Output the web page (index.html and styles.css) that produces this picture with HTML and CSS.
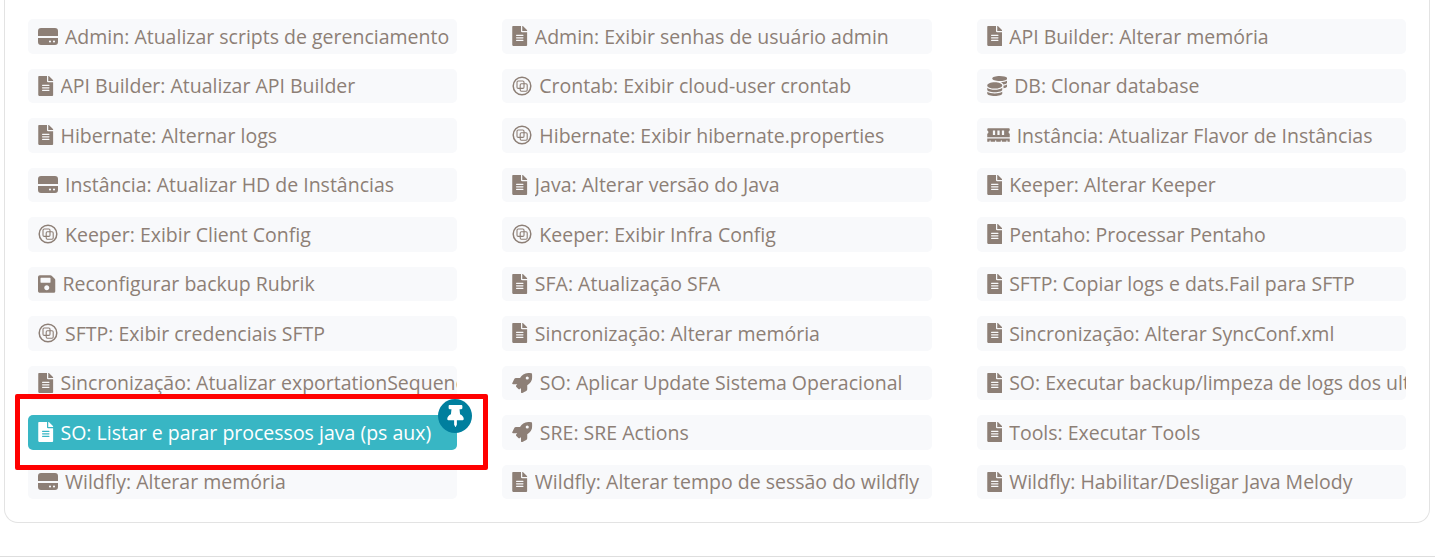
FILE: index.html
```html
<!DOCTYPE html>
<html lang="pt-BR">
<head>
    <meta charset="UTF-8">
    <meta name="viewport" content="width=device-width, initial-scale=1.0">
    <title>Ações</title>
    <link rel="stylesheet" href="styles.css">
</head>
<body>
    <svg class="icon-defs" aria-hidden="true">
        <symbol id="i-file" viewBox="0 0 384 512"><path d="M224 136V0H24C10.7 0 0 10.7 0 24v464c0 13.3 10.7 24 24 24h336c13.3 0 24-10.7 24-24V160H248c-13.2 0-24-10.8-24-24zm64 236c0 6.6-5.4 12-12 12H108c-6.6 0-12-5.4-12-12v-8c0-6.6 5.4-12 12-12h168c6.6 0 12 5.4 12 12v8zm0-64c0 6.6-5.4 12-12 12H108c-6.6 0-12-5.4-12-12v-8c0-6.6 5.4-12 12-12h168c6.6 0 12 5.4 12 12v8zm0-72v8c0 6.6-5.4 12-12 12H108c-6.6 0-12-5.4-12-12v-8c0-6.6 5.4-12 12-12h168c6.6 0 12 5.4 12 12zm96-114.1v6.1H256V0h6.1c6.4 0 12.5 2.5 17 7l97.9 98c4.5 4.5 7 10.6 7 16.9z"/></symbol>
        <symbol id="i-hdd" viewBox="0 0 20 17"><path fill-rule="evenodd" d="M3 0h14a3 3 0 0 1 3 3v5H0V3a3 3 0 0 1 3-3zM0 10h20v4a3 3 0 0 1-3 3H3a3 3 0 0 1-3-3v-4zm12 2.4a1.1 1.1 0 1 0 0 2.2 1.1 1.1 0 0 0 0-2.2zm4 0a1.1 1.1 0 1 0 0 2.2 1.1 1.1 0 0 0 0-2.2z"/></symbol>
        <symbol id="i-clone" viewBox="0 0 20 20"><g fill="none" stroke="currentColor"><circle cx="10" cy="10" r="8.8" stroke-width="1.5"/><rect x="5" y="5" width="7" height="7.4" rx="1.2" stroke-width="1.1"/><rect x="8.2" y="7.8" width="7" height="7.4" rx="1.2" stroke-width="1.1"/></g></symbol>
        <symbol id="i-coins" viewBox="0 0 512 512"><path d="M0 405.3V448c0 35.3 86 64 192 64s192-28.7 192-64v-42.7C342.7 434.4 267.2 448 192 448S41.3 434.4 0 405.3zM320 128c106 0 192-28.7 192-64S426 0 320 0 128 28.7 128 64s86 64 192 64zM0 300.4V352c0 35.3 86 64 192 64s192-28.7 192-64v-51.6c-41.3 34-116.9 51.6-192 51.6S41.3 334.4 0 300.4zm416 11c57.3-11.1 96-31.7 96-55.4v-42.7c-23.2 16.4-57.3 27.6-96 34.5v63.6zM192 160C86 160 0 195.8 0 240s86 80 192 80 192-35.8 192-80-86-80-192-80zm219.3 56.3c60-10.8 100.7-32 100.7-56.3v-42.7c-35.5 25.1-96.5 38.6-160.7 41.8 29.5 14.3 51.2 33.5 60 57.2z"/></symbol>
        <symbol id="i-memory" viewBox="0 0 640 512"><path d="M640 130.94V96c0-17.67-14.33-32-32-32H32C14.33 64 0 78.33 0 96v34.94c18.6 6.61 32 24.19 32 45.06s-13.4 38.45-32 45.06V320h640v-98.94c-18.6-6.61-32-24.19-32-45.06s13.4-38.45 32-45.06zM224 256h-64V128h64v128zm128 0h-64V128h64v128zm128 0h-64V128h64v128zM0 448h64v-26.67c0-8.84 7.16-16 16-16s16 7.16 16 16V448h128v-26.67c0-8.84 7.16-16 16-16s16 7.16 16 16V448h128v-26.67c0-8.84 7.16-16 16-16s16 7.16 16 16V448h128v-26.67c0-8.84 7.16-16 16-16s16 7.16 16 16V448h64v-96H0v96z"/></symbol>
        <symbol id="i-save" viewBox="0 0 448 512"><path d="M433.941 129.941l-83.882-83.882A48 48 0 0 0 316.118 32H48C21.49 32 0 53.49 0 80v352c0 26.51 21.49 48 48 48h352c26.51 0 48-21.49 48-48V163.882a48 48 0 0 0-14.059-33.941zM224 416c-35.346 0-64-28.654-64-64 0-35.346 28.654-64 64-64s64 28.654 64 64c0 35.346-28.654 64-64 64zm96-304.52V212c0 6.627-5.373 12-12 12H76c-6.627 0-12-5.373-12-12V108c0-6.627 5.373-12 12-12h228.52c3.183 0 6.235 1.264 8.485 3.515l3.48 3.48A11.996 11.996 0 0 1 320 111.48z"/></symbol>
        <symbol id="i-rocket" viewBox="0 0 512 512"><path d="M505.05 19.1a15.89 15.89 0 0 0-12.2-12.2C460.65 0 435.46 0 410.36 0c-103.2 0-165.1 55.2-211.29 128H94.87A48 48 0 0 0 52 154.49l-49.42 98.8A24 24 0 0 0 24.07 288h103.77l-22.47 22.47a32 32 0 0 0 0 45.25l50.9 50.91a32 32 0 0 0 45.26 0L224 384.16V488a24 24 0 0 0 34.7 21.49l98.7-49.39a47.91 47.91 0 0 0 26.5-42.9V312.79c72.59-46.3 128-108.4 128-211.09.1-25.2.1-50.4-6.85-82.6zM384 168a40 40 0 1 1 40-40 40 40 0 0 1-40 40z"/></symbol>
        <symbol id="i-pin" viewBox="0 0 384 512"><path d="M298.028 214.267L285.793 96H328c13.255 0 24-10.745 24-24V24c0-13.255-10.745-24-24-24H56C42.745 0 32 10.745 32 24v48c0 13.255 10.745 24 24 24h42.207L85.972 214.267C37.465 236.82 0 277.261 0 328c0 13.255 10.745 24 24 24h136v104.007c0 1.242.289 2.467.845 3.578l24 48c2.941 5.882 11.364 5.893 14.311 0l24-48a8.008 8.008 0 0 0 .845-3.578V352h136c13.255 0 24-10.745 24-24-.001-51.183-37.983-91.42-85.973-113.733z"/></symbol>
    </svg>

    <div class="card">
        <div class="action-grid">
            <div class="item"><svg class="icon icon-hdd"><use href="#i-hdd"/></svg><span class="label">Admin: Atualizar scripts de gerenciamento</span></div>
            <div class="item"><svg class="icon icon-file"><use href="#i-file"/></svg><span class="label">Admin: Exibir senhas de usuário admin</span></div>
            <div class="item"><svg class="icon icon-file"><use href="#i-file"/></svg><span class="label">API Builder: Alterar memória</span></div>

            <div class="item"><svg class="icon icon-file"><use href="#i-file"/></svg><span class="label">API Builder: Atualizar API Builder</span></div>
            <div class="item"><svg class="icon icon-clone"><use href="#i-clone"/></svg><span class="label">Crontab: Exibir cloud-user crontab</span></div>
            <div class="item"><svg class="icon icon-coins"><use href="#i-coins"/></svg><span class="label">DB: Clonar database</span></div>

            <div class="item"><svg class="icon icon-file"><use href="#i-file"/></svg><span class="label">Hibernate: Alternar logs</span></div>
            <div class="item"><svg class="icon icon-clone"><use href="#i-clone"/></svg><span class="label">Hibernate: Exibir hibernate.properties</span></div>
            <div class="item"><svg class="icon icon-memory"><use href="#i-memory"/></svg><span class="label">Instância: Atualizar Flavor de Instâncias</span></div>

            <div class="item"><svg class="icon icon-hdd"><use href="#i-hdd"/></svg><span class="label">Instância: Atualizar HD de Instâncias</span></div>
            <div class="item"><svg class="icon icon-file"><use href="#i-file"/></svg><span class="label">Java: Alterar versão do Java</span></div>
            <div class="item"><svg class="icon icon-file"><use href="#i-file"/></svg><span class="label">Keeper: Alterar Keeper</span></div>

            <div class="item"><svg class="icon icon-clone"><use href="#i-clone"/></svg><span class="label">Keeper: Exibir Client Config</span></div>
            <div class="item"><svg class="icon icon-clone"><use href="#i-clone"/></svg><span class="label">Keeper: Exibir Infra Config</span></div>
            <div class="item"><svg class="icon icon-file"><use href="#i-file"/></svg><span class="label">Pentaho: Processar Pentaho</span></div>

            <div class="item"><svg class="icon icon-save"><use href="#i-save"/></svg><span class="label">Reconfigurar backup Rubrik</span></div>
            <div class="item"><svg class="icon icon-file"><use href="#i-file"/></svg><span class="label">SFA: Atualização SFA</span></div>
            <div class="item"><svg class="icon icon-file"><use href="#i-file"/></svg><span class="label">SFTP: Copiar logs e dats.Fail para SFTP</span></div>

            <div class="item"><svg class="icon icon-clone"><use href="#i-clone"/></svg><span class="label">SFTP: Exibir credenciais SFTP</span></div>
            <div class="item"><svg class="icon icon-file"><use href="#i-file"/></svg><span class="label">Sincronização: Alterar memória</span></div>
            <div class="item"><svg class="icon icon-file"><use href="#i-file"/></svg><span class="label">Sincronização: Alterar SyncConf.xml</span></div>

            <div class="item"><svg class="icon icon-file"><use href="#i-file"/></svg><span class="label">Sincronização: Atualizar exportationSequence</span></div>
            <div class="item"><svg class="icon icon-rocket"><use href="#i-rocket"/></svg><span class="label">SO: Aplicar Update Sistema Operacional</span></div>
            <div class="item"><svg class="icon icon-file"><use href="#i-file"/></svg><span class="label">SO: Executar backup/limpeza de logs dos ultimos dias</span></div>

            <div class="item selected">
                <svg class="icon icon-file"><use href="#i-file"/></svg><span class="label">SO: Listar e parar processos java (ps aux)</span>
                <span class="pin-badge"><svg class="pin-icon"><use href="#i-pin"/></svg></span>
                <span class="highlight-box"></span>
            </div>
            <div class="item"><svg class="icon icon-rocket"><use href="#i-rocket"/></svg><span class="label">SRE: SRE Actions</span></div>
            <div class="item"><svg class="icon icon-file"><use href="#i-file"/></svg><span class="label">Tools: Executar Tools</span></div>

            <div class="item"><svg class="icon icon-hdd"><use href="#i-hdd"/></svg><span class="label">Wildfly: Alterar memória</span></div>
            <div class="item"><svg class="icon icon-file"><use href="#i-file"/></svg><span class="label">Wildfly: Alterar tempo de sessão do wildfly</span></div>
            <div class="item"><svg class="icon icon-file"><use href="#i-file"/></svg><span class="label">Wildfly: Habilitar/Desligar Java Melody</span></div>
        </div>
    </div>
    <div class="footer-line"></div>
</body>
</html>
```

FILE: styles.css
```css
* { margin: 0; padding: 0; box-sizing: border-box; }
html, body { height: 100%; overflow: hidden; }
body { font-family: "Open Sans", Arial, sans-serif; background: #fff; color: #8d7f76; padding: 0 5px 0 4px; }
.icon-defs { display: none; }

.card { border: 1px solid #e3e3e3; border-top: none; border-radius: 0 0 14px 14px; padding: 19px 23px 23px; }
.action-grid { display: grid; grid-template-columns: repeat(3, minmax(0, 1fr)); column-gap: 45px; row-gap: 15px; }

.item { position: relative; display: flex; align-items: center; height: 34.5px; padding-left: 10px; background: #f8f9fb; border-radius: 5px; font-size: 19.5px; line-height: 35px; }
.label { flex: 1; min-width: 0; overflow: hidden; white-space: nowrap; }

.icon { flex: none; fill: currentColor; margin-right: 7px; }
.icon-file { width: 15.5px; height: 20px; }
.icon-hdd { width: 20px; height: 17px; }
.icon-clone { width: 20px; height: 20px; }
.icon-coins { width: 20.5px; height: 20px; }
.icon-memory { width: 23px; height: 18px; }
.icon-save { width: 17.5px; height: 20px; }
.icon-rocket { width: 20.5px; height: 20px; }

.selected { z-index: 1; background: #38b6c4; color: #fff; }
.pin-badge { position: absolute; z-index: 1; top: -16px; right: -15px; display: flex; align-items: center; justify-content: center; width: 34px; height: 34px; border-radius: 50%; background: #007f9e; }
.pin-icon { width: 17px; height: 22px; fill: #fff; }
.highlight-box { position: absolute; top: -21px; left: -13px; width: 473px; height: 76px; border: 5px solid #f00; border-radius: 2px; pointer-events: none; }

.footer-line { margin: 33px -5px 0 -4px; border-top: 1px solid #dedede; }
```
